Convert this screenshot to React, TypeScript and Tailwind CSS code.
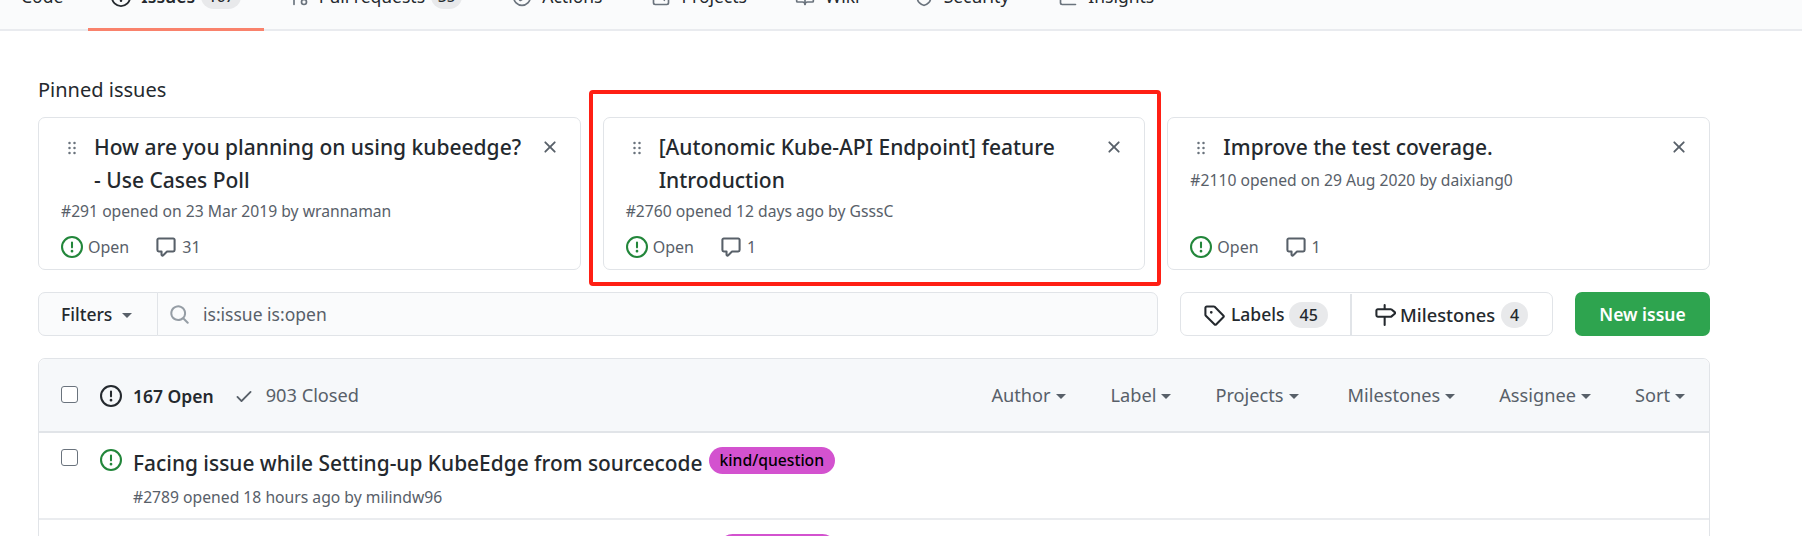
import { BookOpen, CirclePlay, GitPullRequest, LineChart, Shield, SquareKanban } from "lucide-react";
import type { ReactNode } from "react";

const paths = {
  issue:
    "M8 1.5a6.5 6.5 0 100 13 6.5 6.5 0 000-13zM0 8a8 8 0 1116 0A8 8 0 010 8zm9 3a1 1 0 11-2 0 1 1 0 012 0zm-.25-6.25a.75.75 0 00-1.5 0v3.5a.75.75 0 001.5 0v-3.5z",
  comment:
    "M2.75 2.5a.25.25 0 00-.25.25v7.5c0 .138.112.25.25.25h2a.75.75 0 01.75.75v2.19l2.72-2.72a.75.75 0 01.53-.22h4.5a.25.25 0 00.25-.25v-7.5a.25.25 0 00-.25-.25H2.75zM1 2.75C1 1.784 1.784 1 2.75 1h10.5c.966 0 1.75.784 1.75 1.75v7.5A1.75 1.75 0 0113.25 12H9.06l-2.573 2.573A1.457 1.457 0 014 13.543V12H2.75A1.75 1.75 0 011 10.25v-7.5z",
  x: "M3.72 3.72a.75.75 0 011.06 0L8 6.94l3.22-3.22a.75.75 0 111.06 1.06L9.06 8l3.22 3.22a.75.75 0 11-1.06 1.06L8 9.06l-3.22 3.22a.75.75 0 01-1.06-1.06L6.94 8 3.72 4.78a.75.75 0 010-1.06z",
  grabber:
    "M10 13a1 1 0 100-2 1 1 0 000 2zm-4 0a1 1 0 100-2 1 1 0 000 2zm1-5a1 1 0 11-2 0 1 1 0 012 0zm3 1a1 1 0 100-2 1 1 0 000 2zm1-5a1 1 0 11-2 0 1 1 0 012 0zM6 5a1 1 0 100-2 1 1 0 000 2z",
  tag: "M2.5 7.775V2.75a.25.25 0 01.25-.25h5.025a.25.25 0 01.177.073l6.25 6.25a.25.25 0 010 .354l-5.025 5.025a.25.25 0 01-.354 0l-6.25-6.25a.25.25 0 01-.073-.177zm-1.5 0V2.75C1 1.784 1.784 1 2.75 1h5.025c.464 0 .91.184 1.238.513l6.25 6.25a1.75 1.75 0 010 2.474l-5.026 5.026a1.75 1.75 0 01-2.474 0l-6.25-6.25A1.75 1.75 0 011 7.775zM6 5a1 1 0 100 2 1 1 0 000-2z",
  milestone:
    "M7.75 0a.75.75 0 01.75.75V3h3.634c.414 0 .814.147 1.13.414l2.07 1.75a1.75 1.75 0 010 2.672l-2.07 1.75a1.75 1.75 0 01-1.13.414H8.5v5.25a.75.75 0 11-1.5 0V10H2.75A1.75 1.75 0 011 8.25v-3.5C1 3.784 1.784 3 2.75 3H7V.75A.75.75 0 017.75 0zm0 8.5h4.384a.25.25 0 00.161-.06l2.07-1.75a.25.25 0 000-.38l-2.07-1.75a.25.25 0 00-.161-.06H2.75a.25.25 0 00-.25.25v3.5c0 .138.112.25.25.25h5z",
  check:
    "M13.78 4.22a.75.75 0 010 1.06l-7.25 7.25a.75.75 0 01-1.06 0L2.22 9.28a.75.75 0 011.06-1.06L6 10.94l6.72-6.72a.75.75 0 011.06 0z",
  search:
    "M11.5 7a4.499 4.499 0 11-8.998 0A4.499 4.499 0 0111.5 7zm-.82 4.74a6 6 0 111.06-1.06l3.04 3.04a.75.75 0 11-1.06 1.06l-3.04-3.04z",
};

function Octicon({ d, className }: { d: string; className: string }) {
  return (
    <svg viewBox="0 0 16 16" fill="currentColor" className={className}>
      <path fillRule="evenodd" d={d} />
    </svg>
  );
}

function Caret({ className }: { className: string }) {
  return <span className={`inline-block h-0 w-0 border-x-[5px] border-t-[5px] border-x-transparent ${className}`} />;
}

function Tab({
  icon,
  label,
  count,
  active,
  className = "",
}: {
  icon: ReactNode;
  label: string;
  count?: string;
  active?: boolean;
  className?: string;
}) {
  return (
    <div className={`h-[31px] shrink-0 border-b-[3px] px-[23px] ${active ? "border-[#f9826c]" : "border-transparent"} ${className}`}>
      <div className={`-mt-[16px] flex h-[25px] items-center gap-[10px] text-[#24292e] ${active ? "font-semibold" : ""}`}>
        {icon}
        <span>{label}</span>
        {count && (
          <span className="-ml-[4px] rounded-full bg-[#e8e9eb] px-[7px] text-[15px] leading-[25px] font-medium">
            {count}
          </span>
        )}
      </div>
    </div>
  );
}

function PinnedCard({
  title,
  meta,
  comments,
  single,
}: {
  title: ReactNode;
  meta: string;
  comments: string;
  single?: boolean;
}) {
  return (
    <div className="flex h-[153px] flex-1 flex-col rounded-[7px] border border-[#e1e4e8] bg-white pt-[13px] pr-[20px] pb-[10px] pl-[22px]">
      <div className="flex items-start">
        <Octicon d={paths.grabber} className="mt-[7px] ml-[1px] size-[20px] text-[#6a737d]" />
        <div className="ml-[12px] flex-1 text-[21px] leading-[33px] font-medium text-[#24292e]">{title}</div>
        <Octicon d={paths.x} className="mt-[6px] size-[20px] text-[#586069]" />
      </div>
      <div className={`text-[15.7px] leading-[28px] text-[#586069] ${single ? "mt-[2px]" : ""}`}>{meta}</div>
      <div className="mt-auto flex items-center text-[16px] leading-[24px] text-[#586069]">
        <Octicon d={paths.issue} className="size-[22px] text-[#22863a]" />
        <span className="ml-[5px]">Open</span>
        <Octicon d={paths.comment} className="ml-[26px] size-[22px]" />
        <span className="ml-[5px]">{comments}</span>
      </div>
    </div>
  );
}

function Sort({ label, className }: { label: string; className: string }) {
  return (
    <span className={`flex items-center gap-[5px] ${className}`}>
      {label}
      <Caret className="mt-[2px] border-t-[#586069]" />
    </span>
  );
}

export default function App() {
  return (
    <div className="relative h-[536px] w-[1802px] overflow-hidden bg-white font-['Noto_Sans',sans-serif] text-[17.5px]">
      <div className="h-[31px] overflow-hidden bg-[#fafbfc] shadow-[inset_0_-2px_0_#e9ebef]">
        <div className="-ml-[32px] flex gap-[2px]">
          <Tab icon={<span className="size-[20px]" />} label="Code" />
          <Tab icon={<Octicon d={paths.issue} className="size-[20px] text-[#24292e]" />} label="Issues" count="167" active />
          <Tab icon={<GitPullRequest className="size-[20px] text-[#6a737d]" />} label="Pull requests" count="35" />
          <Tab icon={<CirclePlay className="size-[20px] text-[#6a737d]" />} label="Actions" className="ml-[2px]" />
          <Tab icon={<SquareKanban className="size-[20px] text-[#6a737d]" />} label="Projects" className="ml-[1px]" />
          <Tab icon={<BookOpen className="size-[20px] text-[#6a737d]" />} label="Wiki" />
          <Tab icon={<Shield className="size-[20px] text-[#6a737d]" />} label="Security" className="ml-[6px]" />
          <Tab icon={<LineChart className="size-[20px] text-[#6a737d]" />} label="Insights" className="ml-[1px]" />
        </div>
      </div>

      <div className="w-[1710px] pl-[38px]">
        <div className="mt-[46px] text-[20px] leading-[26px] text-[#24292e]">Pinned issues</div>

        <div className="mt-[14px] flex gap-[22px]">
          <PinnedCard
            title={
              <>
                How are you planning on using kubeedge?
                <br />- Use Cases Poll
              </>
            }
            meta="#291 opened on 23 Mar 2019 by wrannaman"
            comments="31"
          />
          <PinnedCard
            title={
              <>
                [Autonomic Kube-API Endpoint] feature
                <br />
                Introduction
              </>
            }
            meta="#2760 opened 12 days ago by GsssC"
            comments="1"
          />
          <PinnedCard title="Improve the test coverage." meta="#2110 opened on 29 Aug 2020 by daixiang0" comments="1" single />
        </div>

        <div className="mt-[22px] flex h-[44px] items-stretch">
          <div className="flex w-[120px] items-center gap-[10px] rounded-l-[7px] border border-[#e1e4e8] bg-[#fafbfc] pt-[1px] pl-[22px] font-medium text-[#24292e]">
            Filters
            <Caret className="mt-[2px] border-t-[#586069]" />
          </div>
          <div className="-ml-px flex w-[1001px] items-center rounded-r-[7px] border border-[#e1e4e8] bg-[#fafbfc] pt-[1px] pl-[11px] text-[#586069]">
            <Octicon d={paths.search} className="size-[21px] text-[#959da5]" />
            <span className="ml-[13px]">is:issue is:open</span>
          </div>
          <div className="ml-[22px] flex w-[373px] rounded-[7px] border border-[#e1e4e8] pt-[1px] font-medium text-[#24292e]">
            <div className="flex w-[171px] items-center border-r-[2px] border-[#e1e4e8] pl-[22px]">
              <Octicon d={paths.tag} className="size-[22px]" />
              <span className="ml-[6px]">Labels</span>
              <span className="ml-[5px] rounded-full bg-[#e8e9eb] px-[10px] text-[16px] leading-[26px]">45</span>
            </div>
            <div className="flex flex-1 items-center pl-[22px]">
              <Octicon d={paths.milestone} className="size-[22px]" />
              <span className="ml-[4px] text-[18.3px]">Milestones</span>
              <span className="ml-[6px] rounded-full bg-[#e8e9eb] px-[9px] text-[16px] leading-[26px]">4</span>
            </div>
          </div>
          <div className="ml-[22px] flex w-[135px] items-center justify-center rounded-[7px] bg-[#2ea44f] pt-[1px] font-semibold text-white">
            New issue
          </div>
        </div>

        <div className="mt-[22px] w-[1672px] rounded-t-[7px] border border-[#e1e4e8]">
          <div className="flex h-[74px] items-center rounded-t-[7px] border-b-[2px] border-[#e1e4e8] bg-[#f6f8fa] pt-[2px] pr-[24px] pl-[22px] text-[18.2px] text-[#586069]">
            <span className="-mt-[4px] size-[17px] rounded-[3px] border border-[#6a737d] bg-white" />
            <Octicon d={paths.issue} className="ml-[22px] size-[22px] text-[#24292e]" />
            <span className="ml-[11px] text-[17.5px] font-semibold text-[#24292e]">167 Open</span>
            <Octicon d={paths.check} className="ml-[20px] size-[20px]" />
            <span className="ml-[12px]">903 Closed</span>
            <Sort label="Author" className="ml-auto" />
            <Sort label="Label" className="ml-[45px]" />
            <Sort label="Projects" className="ml-[44px]" />
            <Sort label="Milestones" className="ml-[49px]" />
            <Sort label="Assignee" className="ml-[44px]" />
            <Sort label="Sort" className="ml-[44px]" />
          </div>
          <div className="flex h-[87px] items-start border-b-[2px] border-[#eaecef] pl-[22px]">
            <span className="mt-[16px] size-[17px] rounded-[3px] border border-[#6a737d] bg-white" />
            <Octicon d={paths.issue} className="mt-[16px] ml-[22px] size-[22px] text-[#22863a]" />
            <div className="ml-[11px]">
              <div className="mt-[16px] flex items-start text-[20.9px] leading-[28px] font-medium text-[#24292e]">
                Facing issue while Setting-up KubeEdge from sourcecode
                <span className="-mt-[2px] ml-[6px] rounded-full bg-[#d352cf] px-[11px] text-[15.7px] leading-[27px] text-black">
                  kind/question
                </span>
              </div>
              <div className="mt-[8px] text-[15.7px] leading-[24px] text-[#586069]">#2789 opened 18 hours ago by milindw96</div>
            </div>
          </div>
          <div className="pt-[14px] pl-[680px]">
            <span className="block h-[27px] w-[117px] rounded-full bg-[#d352cf]" />
          </div>
        </div>
      </div>

      <div className="absolute top-[90px] left-[589px] h-[196px] w-[572px] rounded-[4px] border-[4px] border-[#ff1f14]" />
    </div>
  );
}
